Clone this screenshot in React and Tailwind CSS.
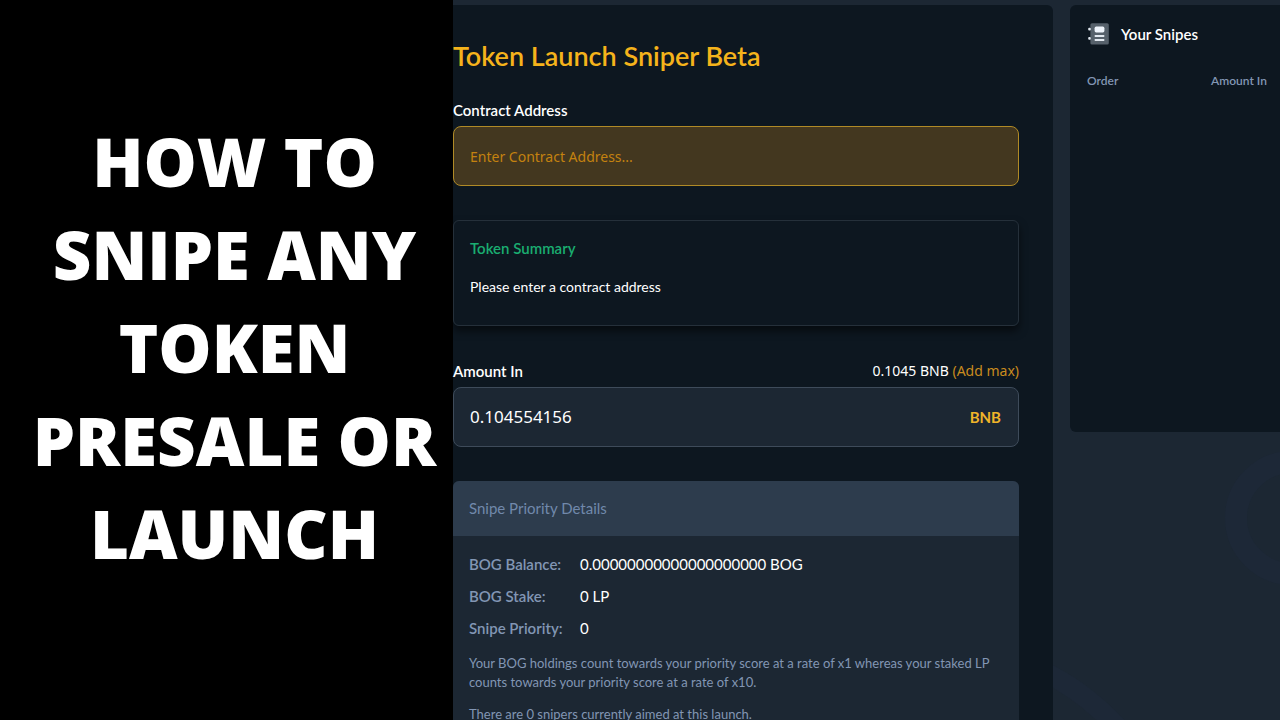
import { useState } from 'react';

const details = [
    { label: 'BOG Balance:', value: '0.00000000000000000000 BOG' },
    { label: 'BOG Stake:', value: '0 LP' },
    { label: 'Snipe Priority:', value: '0' },
];

function JournalIcon() {
    return (
        <svg viewBox="0 0 22 22" className="w-[22px] h-[22px] shrink-0" aria-hidden="true">
            <rect x="3.4" y="0.2" width="18.4" height="21.4" rx="1.6" fill="#56616b" />
            <rect x="7.6" y="3.6" width="9.8" height="5.8" rx="1.6" fill="#eef4fb" />
            <rect x="7.6" y="12" width="9.8" height="1.9" rx="0.6" fill="#e2e9f0" />
            <rect x="7.6" y="16" width="9.8" height="1.9" rx="0.6" fill="#e2e9f0" />
            <rect x="1.2" y="4.8" width="2.6" height="2.8" rx="1" fill="#e2e9f0" />
            <rect x="1.2" y="14" width="2.6" height="2.8" rx="1" fill="#e2e9f0" />
        </svg>
    );
}

function Backdrop() {
    return (
        <svg viewBox="0 0 240 320" className="absolute right-0 bottom-0 w-[240px] h-[320px]" fill="none" stroke="#1d2837" aria-hidden="true">
            <circle cx="252" cy="118" r="56" strokeWidth="22" />
            <path d="M0 270 Q44 290 80 330" strokeWidth="20" />
        </svg>
    );
}

function Banner() {
    return (
        <section className="w-[453px] shrink-0 bg-black flex items-center justify-center pl-4 pb-[26px]">
            <h1 className="font-['Open_Sans',sans-serif] font-extrabold text-[67px] leading-[93px] text-white text-center">
                HOW TO<br />SNIPE ANY<br />TOKEN<br />PRESALE OR<br />LAUNCH
            </h1>
        </section>
    );
}

function SniperForm() {
    const [address, setAddress] = useState('');
    const [amount, setAmount] = useState('0.104554156');

    return (
        <main className="relative flex-1 min-w-0 bg-[#0d1720] rounded-tr-md pt-[33px] pr-[34px]">
            <h2 className="text-[27px] leading-9 font-semibold text-[#f5b31b] whitespace-nowrap">Token Launch Sniper Beta</h2>

            <label htmlFor="contract" className="block mt-[26px] text-[15px] leading-5 font-semibold text-white">Contract Address</label>
            <input
                id="contract"
                type="text"
                value={address}
                onChange={(e) => setAddress(e.target.value)}
                placeholder="Enter Contract Address..."
                className="block w-full h-[60px] mt-1.5 px-4 rounded-lg border border-[#b08a26] bg-[#43371f] font-['Noto_Sans',sans-serif] text-[14px] text-[#f5b31b] placeholder:text-[#c4820f] outline-none"
            />

            <section className="mt-[34px] h-[106px] px-4 pt-[17px] rounded-md border border-[#25303a] shadow-[0_5px_8px_rgba(0,0,0,0.55)]">
                <h3 className="text-[15px] leading-5 font-semibold text-[#1aad70]">Token Summary</h3>
                <p className="mt-[19px] text-[14px] leading-5 text-white">Please enter a contract address</p>
            </section>

            <div className="mt-[35px] flex items-center justify-between leading-5">
                <label htmlFor="amount" className="text-[15px] font-semibold text-white">Amount In</label>
                <div className="font-['Noto_Sans',sans-serif] text-[14px] text-white">
                    0.1045 BNB <button type="button" onClick={() => setAmount('0.104554156')} className="text-[#c98b1e]">(Add max)</button>
                </div>
            </div>
            <div className="mt-1.5 h-[60px] flex items-center pl-4 pr-[17px] rounded-lg border border-[#3e4b5a] bg-[#1c2733]">
                <input
                    id="amount"
                    type="text"
                    value={amount}
                    onChange={(e) => setAmount(e.target.value)}
                    className="flex-1 min-w-0 bg-transparent font-['Noto_Sans',sans-serif] text-[17px] text-white outline-none"
                />
                <span className="text-[15px] font-bold text-[#f0b429]">BNB</span>
            </div>

            <section className="mt-[34px] rounded-t-md overflow-hidden bg-[#1c2733] text-[#8296b4]">
                <h3 className="h-[55px] flex items-center px-4 bg-[#2d3c4d] text-[15px] text-[#7189ab]">Snipe Priority Details</h3>
                <div className="px-4 pt-3 pb-5">
                    <dl className="grid grid-cols-[111px_1fr] leading-8">
                        {details.map((row) => (
                            <div key={row.label} className="contents">
                                <dt className="text-[15px] font-semibold">{row.label}</dt>
                                <dd className="text-[15px] text-white">{row.value}</dd>
                            </div>
                        ))}
                    </dl>
                    <p className="mt-[10px] text-[13px] leading-[19px]">
                        Your BOG holdings count towards your priority score at a rate of x1 whereas your staked LP counts towards your priority score at a rate of x10.
                    </p>
                    <p className="mt-[13px] text-[13px] leading-[19px]">There are 0 snipers currently aimed at this launch.</p>
                </div>
            </section>
        </main>
    );
}

function YourSnipes() {
    return (
        <aside className="relative w-[210px] shrink-0 self-start h-[427px] bg-[#0d1720] rounded-l-md pt-[18px] pl-[17px]">
            <div className="flex items-center gap-3">
                <JournalIcon />
                <h2 className="text-[15px] leading-[22px] font-semibold text-white">Your Snipes</h2>
            </div>
            <table className="w-full mt-[26px] table-fixed text-left text-[12px] leading-5 text-[#8296b4]">
                <thead>
                    <tr>
                        <th scope="col" className="w-[124px] font-semibold">Order</th>
                        <th scope="col" className="font-semibold">Amount In</th>
                    </tr>
                </thead>
            </table>
        </aside>
    );
}

export default function App() {
    return (
        <div className="h-screen flex overflow-hidden bg-black font-[Lato,sans-serif]">
            <Banner />
            <div className="relative flex-1 min-w-0 flex gap-[17px] pt-[5px] bg-[#1c2733]">
                <Backdrop />
                <SniperForm />
                <YourSnipes />
            </div>
        </div>
    );
}
